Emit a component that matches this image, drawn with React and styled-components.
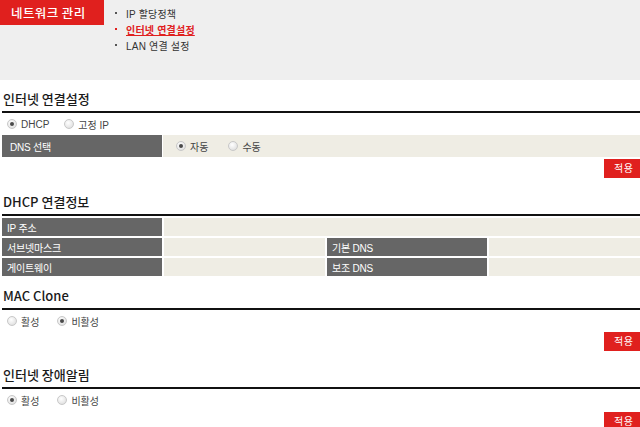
import React from "react";
import styled, { createGlobalStyle } from "styled-components";

const Global = createGlobalStyle`
  html, body { margin: 0; padding: 0; background: #fff; overflow: hidden; }
  body { font-family: "Liberation Sans", "Noto Sans CJK KR", sans-serif; color: #333; }
  * { box-sizing: border-box; }
`;

const Page = styled.div`
  width: 640px;
  height: 427px;
  overflow: hidden;
`;

const Header = styled.div`
  height: 80px;
  background: #efefef;
  display: flex;
  align-items: flex-start;
`;

const Brand = styled.div`
  width: 104px;
  height: 25px;
  background: #e0201e;
  color: #fff;
  font-family: "Noto Sans CJK KR", sans-serif;
  font-size: 12.5px;
  font-weight: 500;
  line-height: 25px;
  padding-left: 11px;
  letter-spacing: 0.4px;
`;

const Menu = styled.ul`
  list-style: none;
  margin: 5px 0 0 11px;
  padding: 0;
`;

const MenuItem = styled.li`
  display: flex;
  align-items: center;
  gap: 9px;
  height: 16px;
  font-size: 10px;
  color: ${(p) => (p.$active ? "#e0201e" : "#333")};
  font-weight: ${(p) => (p.$active ? 700 : 400)};
  text-decoration: ${(p) => (p.$active ? "underline" : "none")};
  letter-spacing: 0.2px;
  &::before {
    content: "";
    width: 2px;
    height: 2px;
    background: ${(p) => (p.$active ? "#e0201e" : "#555")};
    flex: none;
  }
`;

const Title = styled.h2`
  margin: ${(p) => p.$top}px 0 0 2px;
  padding: 0 0 4px 1px;
  border-bottom: 2px solid #111;
  font-family: "Noto Sans CJK KR", sans-serif;
  font-size: 13px;
  font-weight: 500;
  line-height: 16px;
  color: #1a1a1a;
`;

const RadioRow = styled.div`
  height: 22px;
  display: flex;
  align-items: center;
  gap: ${(p) => p.$gap || 15}px;
  padding-left: ${(p) => p.$pad ?? 7}px;
`;

const RadioLabel = styled.label`
  display: flex;
  align-items: center;
  gap: 4px;
  font-size: 10px;
  color: #444;
  letter-spacing: 0;
`;

const RadioDot = styled.span`
  width: 10px;
  height: 10px;
  border-radius: 50%;
  border: 1px solid #c8c8c8;
  background: radial-gradient(circle at 40% 35%, #fff 0%, #e8e8e8 60%, #d4d4d4 100%);
  display: flex;
  align-items: center;
  justify-content: center;
  flex: none;
  &::after {
    content: "";
    width: 4px;
    height: 4px;
    border-radius: 50%;
    background: ${(p) => (p.$checked ? "#4a4a4a" : "transparent")};
  }
`;

const Radio = ({ checked, children }) => (
  <RadioLabel>
    <RadioDot $checked={checked} />
    {children}
  </RadioLabel>
);

const FormRow = styled.div`
  display: flex;
  height: 22px;
  padding-left: 2px;
`;

const Label = styled.div`
  width: 160px;
  background: #666;
  color: #fff;
  font-size: 10px;
  display: flex;
  align-items: center;
  padding-left: ${(p) => p.$pad ?? 5}px;
  letter-spacing: -0.2px;
`;

const Value = styled.div`
  flex: 1;
  margin-left: 1px;
  background: #efede4;
  display: flex;
  align-items: center;
  padding-left: 13px;
`;

const ButtonRow = styled.div`
  display: flex;
  justify-content: flex-end;
  margin-top: ${(p) => p.$top || 0}px;
`;

const Apply = styled.button`
  width: 36px;
  height: 19px;
  border: none;
  background: #e0201e;
  color: #fff;
  font-family: "Noto Sans CJK KR", sans-serif;
  font-size: 10px;
  line-height: 15px;
  padding: 0 2px 2px 10px;
  text-align: left;
  letter-spacing: 0.5px;
  cursor: pointer;
`;

const InfoGrid = styled.div`
  display: grid;
  grid-template-columns: 160px 161px 160px 1fr;
  grid-auto-rows: 18px;
  gap: 2px;
  padding: 2px 0 0 2px;
`;

const Cell = styled.div`
  background: #efede4;
  grid-column: span ${(p) => p.$span || 1};
`;

export default function App() {
  return (
    <Page>
      <Global />
      <Header>
        <Brand>네트워크 관리</Brand>
        <Menu>
          <MenuItem>IP 할당정책</MenuItem>
          <MenuItem $active>인터넷 연결설정</MenuItem>
          <MenuItem>LAN 연결 설정</MenuItem>
        </Menu>
      </Header>

      <Title $top={11}>인터넷 연결설정</Title>
      <RadioRow>
        <Radio checked>DHCP</Radio>
        <Radio>고정 IP</Radio>
      </RadioRow>
      <FormRow>
        <Label $pad={8}>DNS 선택</Label>
        <Value>
          <RadioRow $pad={0} $gap={20}>
            <Radio checked>자동</Radio>
            <Radio>수동</Radio>
          </RadioRow>
        </Value>
      </FormRow>
      <ButtonRow $top={2}>
        <Apply>적용</Apply>
      </ButtonRow>

      <Title $top={16}>DHCP 연결정보</Title>
      <InfoGrid>
        <Label>IP 주소</Label>
        <Cell $span={3} />
        <Label>서브넷마스크</Label>
        <Cell />
        <Label>기본 DNS</Label>
        <Cell />
        <Label>게이트웨이</Label>
        <Cell />
        <Label>보조 DNS</Label>
        <Cell />
      </InfoGrid>

      <Title $top={12}>MAC Clone</Title>
      <RadioRow $gap={18}>
        <Radio>활성</Radio>
        <Radio checked>비활성</Radio>
      </RadioRow>
      <ButtonRow>
        <Apply>적용</Apply>
      </ButtonRow>

      <Title $top={16}>인터넷 장애알림</Title>
      <RadioRow $gap={18}>
        <Radio checked>활성</Radio>
        <Radio>비활성</Radio>
      </RadioRow>
      <ButtonRow $top={1}>
        <Apply>적용</Apply>
      </ButtonRow>
    </Page>
  );
}
